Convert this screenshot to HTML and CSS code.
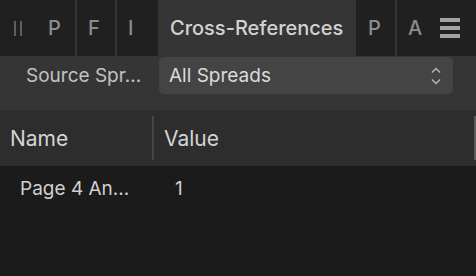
FILE: index.html
```html
<!DOCTYPE html>
<html>
<head>
<meta charset="utf-8">
<link rel="stylesheet" href="styles.css">
</head>
<body>
<div class="panel">
  <div class="tabbar">
    <div class="tab tab-first sep"><span class="grip"><i></i><i></i></span><span class="lbl">P</span></div>
    <div class="tab tab-f sep"><span class="lbl">F</span></div>
    <div class="tab tab-i"><span class="lbl">I</span></div>
    <div class="tab tab-active"><span class="lbl">Cross-References</span></div>
    <div class="tab tab-p sep"><span class="lbl">P</span></div>
    <div class="tab tab-a"><span class="lbl">A</span></div>
    <div class="menu"><i></i><i></i><i></i></div>
  </div>
  <div class="toolbar">
    <span class="label">Source Spr...</span>
    <div class="select">
      <span class="select-text">All Spreads</span>
      <svg class="chev" width="12" height="20" viewBox="0 0 12 20">
        <polyline points="2,6.5 6,2.5 10,6.5" fill="none" stroke="#b8b8b8" stroke-width="1.4"/>
        <polyline points="2,13.5 6,17.5 10,13.5" fill="none" stroke="#b8b8b8" stroke-width="1.4"/>
      </svg>
    </div>
  </div>
  <div class="header">
    <div class="col col-name">Name</div>
    <div class="divider"></div>
    <div class="col col-value">Value</div>
    <div class="scroll"></div>
  </div>
  <div class="rows">
    <div class="row">
      <span class="cell cell-name">Page 4 An...</span>
      <span class="cell cell-value">1</span>
    </div>
  </div>
</div>
</body>
</html>
```
FILE: styles.css
```css
html, body {
  margin: 0;
  padding: 0;
  background: #1b1b1b;
}
.panel {
  width: 476px;
  height: 276px;
  display: flex;
  flex-direction: column;
  font-family: Inter, "Liberation Sans", sans-serif;
  overflow: hidden;
}
.tabbar {
  height: 56px;
  flex: none;
  display: flex;
  align-items: stretch;
  background: #202020;
}
.tab {
  display: flex;
  align-items: center;
  box-sizing: border-box;
  padding-left: 11px;
  color: #8c8c8c;
  font-size: 20px;
  font-weight: 500;
}
.sep {
  border-right: 2px solid #333333;
}
.tab-first {
  width: 77px;
  padding-left: 14px;
}
.grip {
  display: flex;
  gap: 4px;
  margin-right: 26px;
}
.grip i {
  display: block;
  width: 2px;
  height: 15px;
  background: #5e5e5e;
}
.tab-f { width: 40px; }
.tab-i { width: 41px; }
.tab-active {
  width: 198px;
  padding-left: 12px;
  background: #353535;
  color: #d2d2d2;
}
.tab-p { width: 41px; padding-left: 12px; }
.tab-a { width: 43px; }
.menu {
  display: flex;
  flex-direction: column;
  justify-content: center;
  gap: 4px;
  padding-left: 0;
}
.menu i {
  display: block;
  width: 20px;
  height: 4px;
  background: #a3a3a3;
}
.toolbar {
  height: 54px;
  flex: none;
  box-sizing: border-box;
  background: #353535;
  display: flex;
  align-items: flex-start;
  padding-top: 1px;
}
.label {
  width: 159px;
  box-sizing: border-box;
  padding-left: 26px;
  line-height: 38px;
  height: 37px;
  font-size: 19px;
  color: #c2c2c2;
}
.select {
  width: 294px;
  height: 37px;
  box-sizing: border-box;
  border-radius: 5px;
  background: #444444;
  display: flex;
  align-items: center;
  justify-content: space-between;
  padding: 0 11px 0 10px;
}
.select-text {
  font-size: 19px;
  color: #dadada;
}
.chev {
  display: block;
  margin-top: 1px;
}
.header {
  height: 56px;
  flex: none;
  background: #2d2d2d;
  display: flex;
  align-items: center;
  color: #d4d4d4;
  font-size: 21px;
}
.col-name {
  width: 152px;
  box-sizing: border-box;
  padding-left: 10px;
}
.divider {
  width: 2px;
  height: 44px;
  background: #474747;
}
.col-value {
  flex: 1;
  padding-left: 10px;
}
.scroll {
  width: 2px;
  height: 44px;
  background: #5a5a5a;
}
.rows {
  flex: 1;
  background: #1b1b1b;
}
.row {
  display: flex;
  align-items: center;
  height: 44px;
  font-size: 19px;
  color: #d0d0d0;
}
.cell-name {
  width: 155px;
  box-sizing: border-box;
  padding-left: 20px;
}
.cell-value {
  padding-left: 20px;
}
```
